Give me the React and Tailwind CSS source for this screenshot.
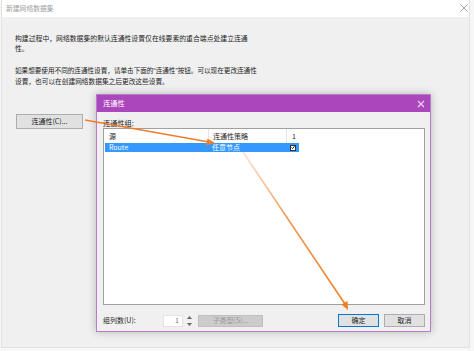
import React from "react";

const F = { fontFamily: '"Noto Sans CJK SC", "Noto Sans", sans-serif' };
const Q = { fontFamily: '"Liberation Sans", sans-serif' };

function WinBtn({ children, className = "" }) {
  return (
    <div className={`flex items-center justify-center border text-[7px] leading-none ${className}`}>
      {children}
    </div>
  );
}

export default function App() {
  return (
    <div style={F} className="relative w-[474px] h-[351px] overflow-hidden bg-[#f7f7f7]">
      <div className="w-[469px] h-[348px] ml-[1px] border-l border-r border-b border-[#e2e2e2] bg-[#f0f0f0] flex flex-col">
        {/* title bar */}
        <div className="h-[17px] bg-white flex items-center justify-between pl-[4px] pr-[2px]">
          <span className="text-[6.8px] text-[#a0a0a0] leading-none">新建网络数据集</span>
        </div>
        {/* body */}
        <div className="pl-[13px] pt-[16px] text-[6.85px] leading-[10px] text-[#1e1e1e]">
          <div className="whitespace-nowrap">构建过程中，网络数据集的默认连通性设置仅在线要素的重合端点处建立连通</div>
          <div className="whitespace-nowrap">性。</div>
          <div className="whitespace-nowrap mt-[12px] text-[6.6px]">
            如果想要使用不同的连通性设置，请单击下面的<span style={Q}>“</span>连通性<span style={Q}>”</span>按钮。可以现在更改连通性
          </div>
          <div className="whitespace-nowrap text-[6.7px]">设置，也可以在创建网络数据集之后更改这些设置。</div>
          <WinBtn className="mt-[28px] ml-[1px] w-[67px] h-[15px] bg-[#e1e1e1] border-[#adadad] text-[#222]">
            连通性(C)...
          </WinBtn>
        </div>
      </div>
      {/* outer close */}
      <svg className="absolute left-[460px] top-[4px]" width="8" height="8" viewBox="0 0 8 8">
        <path d="M0.5 0.5L7.5 7.5M7.5 0.5L0.5 7.5" stroke="#9a9a9a" strokeWidth="0.9" />
      </svg>

      {/* dialog */}
      <div className="absolute left-[96px] top-[94px] w-[335px] h-[238px] border border-[#b77dc6] bg-[#f0f0f0] shadow-[0_0_8px_rgba(0,0,0,0.25)] flex flex-col">
        <div className="h-[17px] bg-[#ab47bc] flex items-center justify-between pl-[6px] pr-[5px] shrink-0">
          <span className="text-white text-[7.2px] leading-none">连通性</span>
          <svg width="8" height="8" viewBox="0 0 8 8">
            <path d="M1 1L7 7M7 1L1 7" stroke="#f4d6f7" strokeWidth="1.1" />
          </svg>
        </div>
        <div className="flex flex-col pl-[6px] pr-[5px]">
          <div className="h-[10px] mt-[6px] text-[7.2px] leading-[10px] text-[#1e1e1e]">连通性组:</div>
          <div className="h-[177px] bg-white border border-[#a0a0a0] flex flex-col pt-[0px] pl-[1px]">
            <div className="h-[14px] flex items-center text-[7px] text-[#1e1e1e]">
              <div className="w-[103px] pl-[4px] h-full flex items-center">源</div>
              <div className="w-[78px] pl-[4px] h-full flex items-center border-l border-[#e5e5e5]">连通性策略</div>
              <div className="w-[13px] pl-[5px] h-full flex items-center border-l border-[#e5e5e5]">1</div>
            </div>
            <div className="h-[9px] w-[194px] bg-[#3399ff] flex items-center text-[7px] text-white leading-none">
              <div className="w-[103px] pl-[4px]">Route</div>
              <div className="w-[78px] pl-[4px]">任意节点</div>
              <div className="w-[13px] flex items-center justify-center pl-[1px]">
                <div className="w-[6px] h-[6px] bg-white border border-[#333] flex items-center justify-center">
                  <svg width="5" height="5" viewBox="0 0 5 5">
                    <path d="M0.6 2.6L2 3.9L4.4 0.9" stroke="#000" strokeWidth="1.1" fill="none" />
                  </svg>
                </div>
              </div>
            </div>
          </div>
          <div className="mt-[9px] h-[13px] flex items-center text-[7px] text-[#1e1e1e]">
            <span className="w-[60px]">组列数(U):</span>
            <div className="w-[20px] h-[12px] bg-white border border-[#e3e3e3] flex items-center justify-end pr-[3px] text-[#777]">1</div>
            <div className="w-[7px] h-[12px] ml-[3px] flex flex-col items-center justify-between py-[1px]">
              <svg width="5" height="3" viewBox="0 0 5 3"><path d="M0 3L2.5 0L5 3Z" fill="#666" /></svg>
              <svg width="5" height="3" viewBox="0 0 5 3"><path d="M0 0L2.5 3L5 0Z" fill="#666" /></svg>
            </div>
            <WinBtn className="ml-[5px] w-[65px] h-[12px] bg-[#cccccc] border-[#bfbfbf] text-[#9a9a9a]">子类型(S)...</WinBtn>
            <WinBtn className="ml-[75px] w-[41px] h-[13px] bg-[#e1e1e1] border-[#0078d7] text-[#1e1e1e]">确定</WinBtn>
            <WinBtn className="ml-[5px] w-[41px] h-[13px] bg-[#e1e1e1] border-[#adadad] text-[#1e1e1e]">取消</WinBtn>
          </div>
        </div>
      </div>

      {/* annotation arrows */}
      <svg className="absolute inset-0 pointer-events-none" width="474" height="351" viewBox="0 0 474 351">
        <defs>
          <linearGradient id="g2" x1="243" y1="152" x2="348" y2="310" gradientUnits="userSpaceOnUse">
            <stop offset="0" stopColor="#f3a05f" stopOpacity="0.3" />
            <stop offset="0.4" stopColor="#f08a3a" stopOpacity="0.85" />
            <stop offset="1" stopColor="#ef7d22" stopOpacity="1" />
          </linearGradient>
        </defs>
        <line x1="85" y1="120" x2="209" y2="142" stroke="#ef7d2a" strokeWidth="1.3" />
        <polygon points="215,143 206,145.5 207.5,138.5" fill="#ef7d2a" />
        <line x1="243" y1="152" x2="345" y2="304" stroke="url(#g2)" strokeWidth="1.6" />
        <polygon points="348,310 341.5,304.5 347.5,301" fill="#ef7d22" />
      </svg>
    </div>
  );
}
